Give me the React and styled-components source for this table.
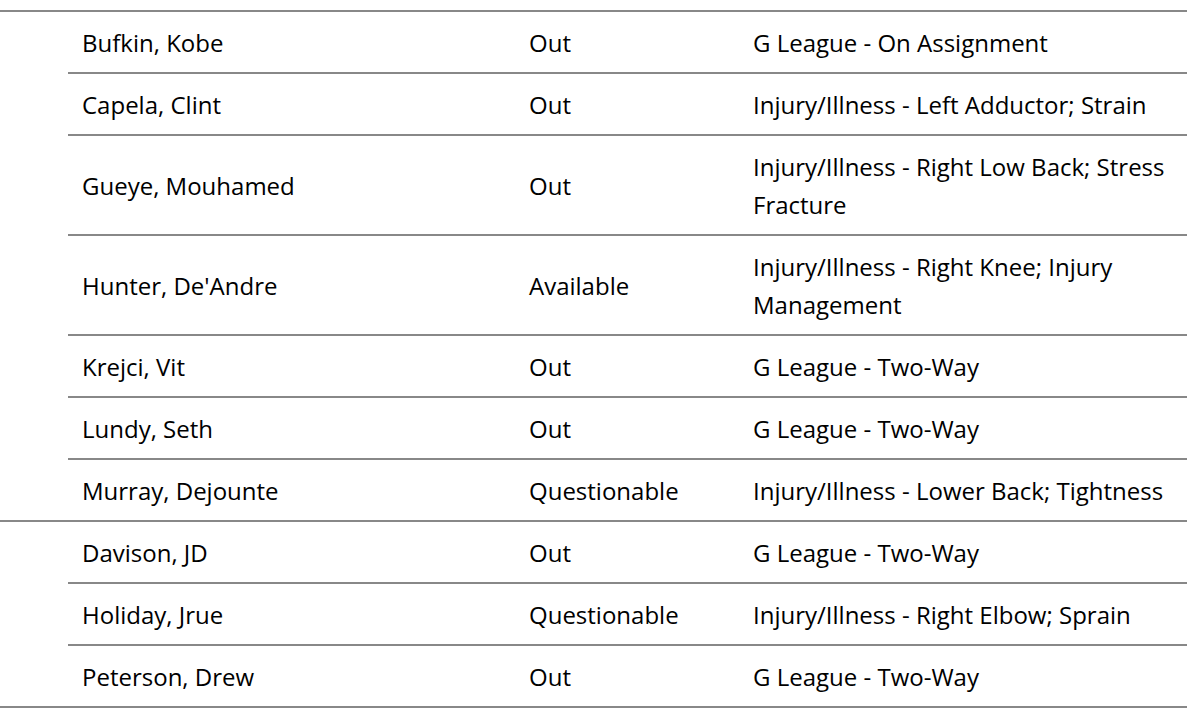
import React from "react";
import styled, { createGlobalStyle } from "styled-components";

const Global = createGlobalStyle`
  html, body { margin: 0; padding: 0; background: #fff; }
  body { font-family: "Open Sans", Lato, sans-serif; color: #000; }
`;

const Page = styled.div`
  padding-top: 10px;
  width: 1187px;
`;

const Table = styled.table`
  width: 1187px;
  border-collapse: collapse;
  table-layout: fixed;
  border-top: 2px solid #888;
`;

const Col = styled.col`
  width: ${(p) => p.$w}px;
`;

const GroupCell = styled.td`
  border-bottom: 2px solid #888;
  padding: 0;
`;

const Cell = styled.td`
  border-bottom: 2px solid #888;
  padding: 12px 0 10px 14px;
  font-size: 24px;
  line-height: 38px;
  vertical-align: middle;
  white-space: nowrap;
`;

const Line = styled.div``;

const groups = [
  [
    ["Bufkin, Kobe", "Out", ["G League - On Assignment"]],
    ["Capela, Clint", "Out", ["Injury/Illness - Left Adductor; Strain"]],
    ["Gueye, Mouhamed", "Out", ["Injury/Illness - Right Low Back; Stress", "Fracture"]],
    ["Hunter, De'Andre", "Available", ["Injury/Illness - Right Knee; Injury", "Management"]],
    ["Krejci, Vit", "Out", ["G League - Two-Way"]],
    ["Lundy, Seth", "Out", ["G League - Two-Way"]],
    ["Murray, Dejounte", "Questionable", ["Injury/Illness - Lower Back; Tightness"]],
  ],
  [
    ["Davison, JD", "Out", ["G League - Two-Way"]],
    ["Holiday, Jrue", "Questionable", ["Injury/Illness - Right Elbow; Sprain"]],
    ["Peterson, Drew", "Out", ["G League - Two-Way"]],
  ],
];

export default function App() {
  return (
    <Page>
      <Global />
      <Table>
        <colgroup>
          <Col $w={68} />
          <Col $w={447} />
          <Col $w={224} />
          <Col $w={448} />
        </colgroup>
        {groups.map((rows, gi) => (
          <tbody key={gi}>
            {rows.map((r, i) => (
              <tr key={r[0]}>
                {i === 0 && <GroupCell rowSpan={rows.length} />}
                <Cell>{r[0]}</Cell>
                <Cell>{r[1]}</Cell>
                <Cell>
                  {r[2].map((l) => (
                    <Line key={l}>{l}</Line>
                  ))}
                </Cell>
              </tr>
            ))}
          </tbody>
        ))}
      </Table>
    </Page>
  );
}
